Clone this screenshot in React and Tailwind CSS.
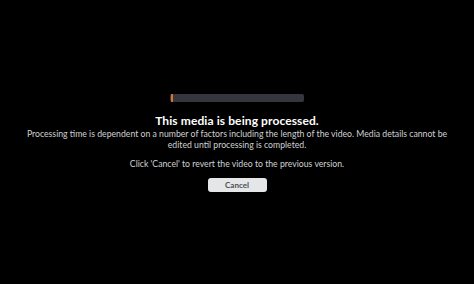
export default function App() {
  return (
    <div
      className="w-[474px] h-[284px] bg-black flex flex-col items-center text-center"
      style={{ fontFamily: '"Lato", "Open Sans", sans-serif' }}
    >
      {/* Progress */}
      <div className="mt-[94px] w-[134px] h-[8px] rounded-[2px] bg-[#33373d] flex overflow-hidden">
        <div className="w-[2px] h-full ml-[1px] bg-[#e0702a]" />
      </div>

      <h1 className="mt-[12px] text-[12px] leading-[14px] font-bold text-white tracking-[0.1px]">
        This media is being processed.
      </h1>

      <p className="text-[8.7px] leading-[11px] text-[#cfd1d3] whitespace-nowrap">
        Processing time is dependent on a number of factors including the length of the video. Media details cannot be
        <br />
        edited until processing is completed.
      </p>

      <p className="mt-[8px] text-[8.7px] leading-[11px] text-[#cfd1d3]">
        Click 'Cancel' to revert the video to the previous version.
      </p>

      <button className="mt-[9px] w-[59px] h-[14px] rounded-[3px] bg-[#e4e6e8] text-[#4a4f55] text-[8px] leading-[14px] font-bold">
        Cancel
      </button>
    </div>
  );
}
